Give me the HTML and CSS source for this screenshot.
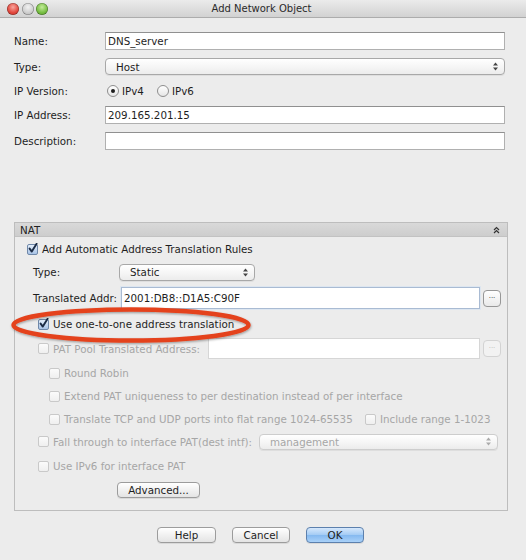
FILE: index.html
```html
<!DOCTYPE html>
<html>
<head>
<meta charset="utf-8">
<title>Add Network Object</title>
<link rel="stylesheet" href="styles.css">
</head>
<body>
<div class="window">
  <div class="titlebar">
    <div class="lights"><span class="light red"></span><span class="light gray"></span><span class="light green"></span></div>
    <div class="title">Add Network Object</div>
    <div></div>
  </div>

  <div class="form">
    <div class="row h18"><span class="lbl">Name:</span><div class="input">DNS_server</div></div>
    <div class="row h17"><span class="lbl">Type:</span>
      <div class="select"><span>Host</span>
        <svg class="arrows" width="5" height="9" viewBox="0 0 5 9"><polygon points="0,3.6 2.5,0.6 5,3.6"/><polygon points="0,5.4 2.5,8.4 5,5.4"/></svg>
      </div>
    </div>
    <div class="row h15"><span class="lbl">IP Version:</span>
      <div class="radios">
        <span class="radio on"></span><span class="rtext">IPv4</span>
        <span class="radio second"></span><span class="rtext">IPv6</span>
      </div>
    </div>
    <div class="row h18"><span class="lbl">IP Address:</span><div class="input">209.165.201.15</div></div>
    <div class="row h18"><span class="lbl">Description:</span><div class="input"></div></div>
  </div>

  <div class="nat">
    <div class="nat-head"><span>NAT</span>
      <svg width="7" height="8" viewBox="0 0 7 8"><polyline points="1,4 3.5,1.5 6,4"/><polyline points="1,7 3.5,4.5 6,7"/></svg>
    </div>
    <div class="nat-body">
      <div class="row h18 lvl1">
        <span class="cb checked"><svg width="12" height="12" viewBox="0 0 12 12"><path d="M2.6 5.6 L4.8 8.6 L9.6 0.8"/></svg></span>
        <span>Add Automatic Address Translation Rules</span>
      </div>
      <div class="row h18 lvl2">
        <span class="lbl2">Type:</span>
        <div class="select small"><span>Static</span>
          <svg class="arrows" width="5" height="9" viewBox="0 0 5 9"><polygon points="0,3.6 2.5,0.6 5,3.6"/><polygon points="0,5.4 2.5,8.4 5,5.4"/></svg>
        </div>
      </div>
      <div class="row h24 lvl2 pr">
        <span class="lbl3">Translated Addr:</span>
        <div class="input tall focus">2001:DB8::D1A5:C90F</div>
        <span class="dots">...</span>
      </div>
      <div class="row h18 lvl2b">
        <span class="cb checked"><svg width="12" height="12" viewBox="0 0 12 12"><path d="M2.6 5.6 L4.8 8.6 L9.6 0.8"/></svg></span>
        <span>Use one-to-one address translation</span>
      </div>
      <div class="row h21 lvl2b pr dis">
        <span class="cbl w170"><span class="cb"></span><span>PAT Pool Translated Address:</span></span>
        <div class="input dis-in"></div>
        <span class="dots disd">...</span>
      </div>
      <div class="row h18 lvl3 dis">
        <span class="cb"></span><span>Round Robin</span>
      </div>
      <div class="row h18 lvl3 dis">
        <span class="cb"></span><span>Extend PAT uniqueness to per destination instead of per interface</span>
      </div>
      <div class="row h18 lvl3 dis">
        <span class="cbl w316"><span class="cb"></span><span>Translate TCP and UDP ports into flat range 1024-65535</span></span>
        <span class="cb"></span><span>Include range 1-1023</span>
      </div>
      <div class="row h17 lvl2b dis pr2">
        <span class="cbl w221"><span class="cb"></span><span>Fall through to interface PAT(dest intf):</span></span>
        <div class="select dis-sel"><span>management</span>
          <svg class="arrows" width="5" height="9" viewBox="0 0 5 9"><polygon points="0,3.6 2.5,0.6 5,3.6"/><polygon points="0,5.4 2.5,8.4 5,5.4"/></svg>
        </div>
      </div>
      <div class="row h22 lvl2b dis">
        <span class="cb"></span><span>Use IPv6 for interface PAT</span>
      </div>
      <div class="row h16 adv-row">
        <span class="btn adv">Advanced...</span>
      </div>
    </div>
  </div>

  <div class="buttons">
    <span class="btn b-help">Help</span>
    <span class="btn b-cancel">Cancel</span>
    <span class="btn b-ok">OK</span>
  </div>

  <svg class="annot" width="526" height="560" viewBox="0 0 526 560">
    <defs>
      <filter id="sh" x="-10%" y="-50%" width="120%" height="200%">
        <feDropShadow dx="0.5" dy="1.2" stdDeviation="1" flood-color="#000" flood-opacity="0.35"/>
      </filter>
    </defs>
    <ellipse cx="131" cy="325" rx="117.5" ry="15.5" fill="none" stroke="#e4421e" stroke-width="4.5" filter="url(#sh)"/>
  </svg>
</div>
</body>
</html>
```

FILE: styles.css
```css
* { box-sizing: border-box; }

body {
  margin: 0;
  background: #ececec;
  font-family: "DejaVu Sans", "Liberation Sans", sans-serif;
  font-size: 10.3px;
  color: #1e1e1e;
}

.window {
  position: relative;
  width: 526px;
  height: 560px;
  overflow: hidden;
  background: #ececec;
}

/* title bar */
.titlebar {
  height: 18px;
  display: grid;
  grid-template-columns: 1fr auto 1fr;
  align-items: center;
  background: linear-gradient(#ebebeb, #d2d2d2);
  border-bottom: 1px solid #acacac;
}
.title { font-size: 10px; color: #2a2a2a; padding-right: 3px; }
.lights { display: flex; gap: 2.5px; padding-left: 7px; }
.light {
  width: 12px; height: 12px; border-radius: 50%;
  box-shadow: inset 0 0 0 0.6px rgba(0,0,0,0.35);
}
.red { background: radial-gradient(circle at 50% 35%, #f8a69e 0%, #e2493f 55%, #b42b22 100%); }
.gray { background: radial-gradient(circle at 50% 35%, #f2f2f2 0%, #cfcfcf 55%, #a9a9a9 100%); }
.green { background: radial-gradient(circle at 50% 35%, #c4ec9a 0%, #78bf44 55%, #4f8f26 100%); }

/* generic rows */
.row { display: flex; align-items: center; white-space: nowrap; }
.h15 { height: 15px; }
.h16 { height: 16px; }
.h17 { height: 17px; }
.h18 { height: 18px; }
.h21 { height: 21px; }
.h22 { height: 22px; }
.h24 { height: 24px; }

/* top form */
.form {
  padding: 14px 21px 0 14px;
  display: flex;
  flex-direction: column;
  gap: 8px;
}
.lbl { width: 91px; flex: none; }

.input {
  flex: 1;
  height: 100%;
  background: #fff;
  border: 1px solid #b0b0b0;
  border-top-color: #909090;
  padding-left: 2px;
  display: flex;
  align-items: center;
}
.input.tall { height: 22px; }
.input.focus { border: 1px solid #a9bbd3; box-shadow: 0 0 0 1px #dde6f0; }
.input.dis-in { border-color: #d6d6d6; }

.select {
  flex: 1;
  height: 100%;
  border: 1px solid #a8a8a8;
  border-radius: 4px;
  background: linear-gradient(#ffffff, #f6f6f6 50%, #ececec);
  display: flex;
  align-items: center;
  justify-content: space-between;
  padding: 0 6px 0 10px;
  box-shadow: 0 1px 0 rgba(0,0,0,0.06);
}
.select.small { flex: none; width: 136px; height: 17px; }
.arrows { fill: #444; flex: none; }
.dis-sel { border-color: #cdcdcd; color: #a6a6a6; height: 16px; }
.dis-sel .arrows { fill: #aaa; }

.radios { display: flex; align-items: center; padding-left: 2px; }
.radio {
  width: 12px; height: 12px; border-radius: 50%;
  border: 1px solid #8e8e8e;
  background: linear-gradient(#ffffff, #e6e6e6);
  display: flex; align-items: center; justify-content: center;
  flex: none;
}
.radio.on::after {
  content: ""; width: 4px; height: 4px; border-radius: 50%; background: #1d1d1d;
}
.radio.second { margin-left: 13px; }
.rtext { margin-left: 3px; }

/* NAT panel */
.nat {
  margin: 72px 18px 0 14px;
  border: 1px solid #bdbdbd;
}
.nat-head {
  height: 14px;
  background: linear-gradient(#d9d9d9, #cdcdcd);
  border-bottom: 1px solid #c2c2c2;
  display: flex;
  align-items: center;
  justify-content: space-between;
  padding: 0 7px 0 5px;
  color: #222;
}
.nat-head svg { fill: none; stroke: #333; stroke-width: 1.2; }

.nat-body {
  padding: 3px 6px 12px 12px;
  display: flex;
  flex-direction: column;
  gap: 5px;
}
.lvl1 { padding-left: 0; }
.lvl2 { padding-left: 6px; }
.lvl2b { padding-left: 11px; }
.lvl3 { padding-left: 22px; }
.pr2 { padding-right: 3px; }

.lbl2 { width: 86px; flex: none; }
.lbl3 { width: 88px; flex: none; }

.cb {
  width: 11px; height: 11px; flex: none;
  border: 1px solid #c9c9c9;
  border-radius: 2px;
  background: linear-gradient(#fbfbfb, #efefef);
  margin-right: 4px;
  position: relative;
}
.cb.checked {
  border-color: #6f88a9;
  background: linear-gradient(#e4eefa, #a8c3e6);
}
.cb.checked svg {
  position: absolute; left: -1px; top: -2px;
  fill: none; stroke: #1b2b44; stroke-width: 1.9; stroke-linecap: round; stroke-linejoin: round;
}
.cbl { display: flex; align-items: center; flex: none; }
.w170 { width: 170px; }
.w221 { width: 221px; }
.w316 { width: 316px; }

.dis { color: #a6a6a6; }

.dots {
  width: 18px; height: 17px; flex: none;
  margin-left: 3px;
  border: 1px solid #979797;
  border-radius: 4px;
  background: linear-gradient(#ffffff, #e9e9e9);
  font-size: 7px;
  line-height: 11px;
  text-align: center;
  color: #333;
}
.dots.disd { border-color: #d3d3d3; color: #bbb; background: #f2f2f2; }

.btn {
  height: 16px;
  display: flex; align-items: center; justify-content: center;
  border: 1px solid #9c9c9c;
  border-radius: 4px;
  background: linear-gradient(#ffffff, #f1f1f1 50%, #e4e4e4);
  box-shadow: 0 1px 0 rgba(0,0,0,0.08);
  color: #1e1e1e;
}
.adv-row { padding-left: 90px; }
.adv { width: 83px; }

.buttons {
  margin-top: 16px;
  display: flex;
  justify-content: center;
  gap: 16px;
  padding-right: 5px;
}
.b-help { width: 59px; }
.b-cancel { width: 58px; }
.b-ok {
  width: 58px;
  border-color: #5c80ad;
  background: linear-gradient(#d6e8fc, #a3cbf4 50%, #84b9f0 51%, #a9d1f8);
}

.annot { position: absolute; left: 0; top: 0; pointer-events: none; }
```
